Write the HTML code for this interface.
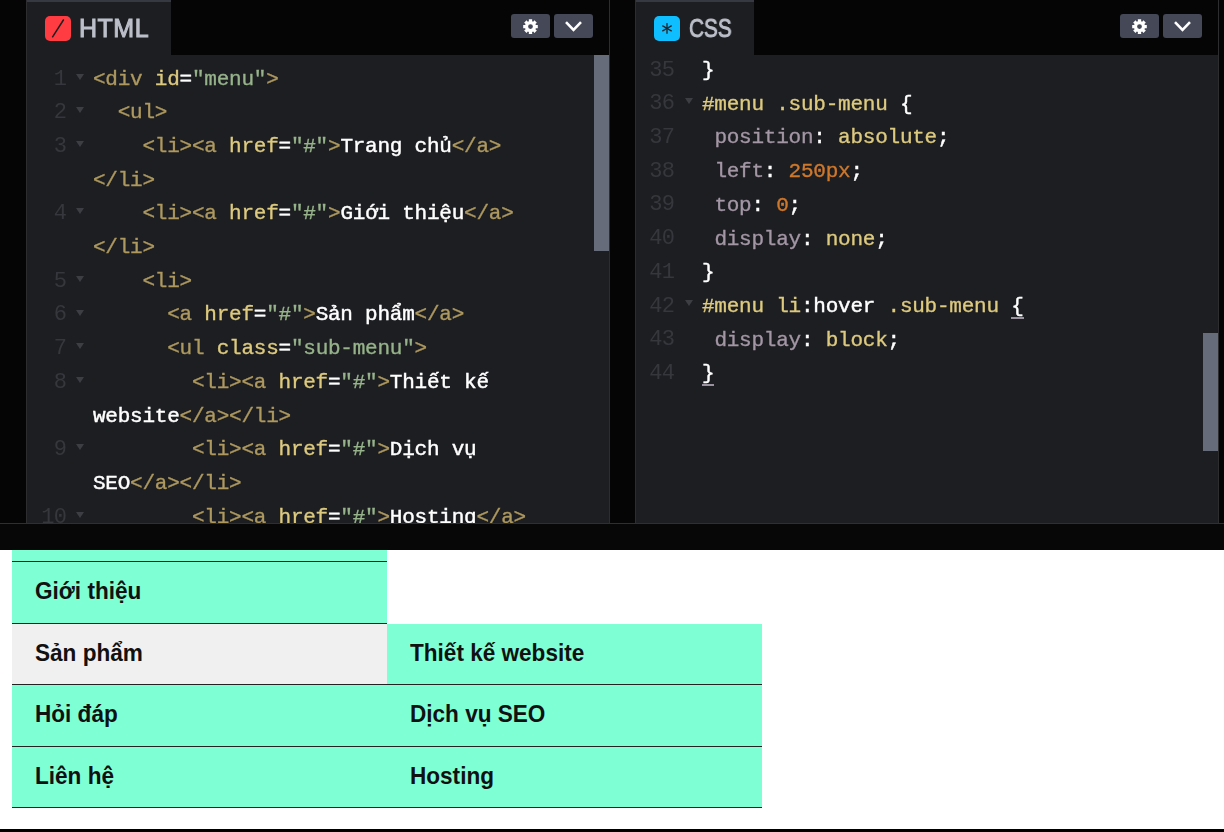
<!DOCTYPE html>
<html><head><meta charset="utf-8">
<style>
*{margin:0;padding:0;box-sizing:border-box}
html,body{width:1224px;height:832px;overflow:hidden;background:#fff}
body{position:relative;font-family:"Liberation Sans",sans-serif}
.abs{position:absolute}
#top{position:absolute;left:0;top:0;width:1224px;height:523px;background:#050505;overflow:hidden}
.panel{position:absolute;top:0;height:523px;background:#1d1e22;overflow:hidden}
.bd{position:absolute;top:0;width:1px;height:523px;background:#2d2d30}
.hdr{position:absolute;left:0;top:0;right:0;height:55px;background:#050505}
.tab{position:absolute;left:0;top:0;height:55px;background:#1d1e22;border-top:2px solid #363842}
.tabt{position:absolute;top:12px;font-family:"Liberation Sans",sans-serif;font-weight:normal;-webkit-text-stroke:1px currentColor;font-size:25px;line-height:32px;color:#bcbfc9;white-space:nowrap;transform-origin:0 0;will-change:transform}
.ico{position:absolute;top:16px;width:26px;height:25px;border-radius:5px}
.btn{position:absolute;top:14px;width:39px;height:24px;background:#444857;border-radius:3px}
.sb{position:absolute;width:15px;background:#676c7a}
.code{position:absolute;-webkit-text-stroke:0.35px currentColor;font-family:"Liberation Mono",monospace;font-size:21px;letter-spacing:-0.235px;line-height:33.7px;white-space:pre;color:#fff}
.ln{position:absolute;font-family:"Liberation Mono",monospace;font-size:22px;line-height:33.7px;color:#35373c;text-align:right;white-space:pre;letter-spacing:-0.87px}
.w{-webkit-text-stroke:0.45px currentColor}
.tri{position:absolute;width:0;height:0;border-left:4px solid transparent;border-right:4px solid transparent;border-top:6.5px solid #3d3e44}
.t{color:#ae995f}.at{color:#ddca7e}.s{color:#96b38a}.p{color:#a396a5}.n{color:#d0782a}.k{color:#ddca7e}
#bar{position:absolute;left:0;top:523px;width:1224px;height:27px;background:#070707;border-top:1px solid #2f2f31}
.g{position:absolute;background:#7fffd4}
.bl{position:absolute;height:1px;background:#222}
.mt{position:absolute;font-family:"Liberation Sans",sans-serif;font-weight:bold;font-size:24px;line-height:26px;color:#111;white-space:pre;transform:scaleX(0.94);transform-origin:0 0}
.ul{position:absolute;height:2px;background:#9a929e}
</style></head><body>
<div id="top">
  <div class="bd" style="left:26px"></div>
  <div class="bd" style="left:609px"></div>
  <div class="bd" style="left:635px"></div>
  <div class="bd" style="left:1218px"></div>
  <div class="panel" style="left:27px;width:582px">
    <div class="hdr">
      <div class="tab" style="width:144px"></div>
      <div class="ico" style="left:18px;background:#ff3c41"><svg width="26" height="25" style="position:absolute;left:0;top:0"><line x1="7.6" y1="20.8" x2="18.4" y2="4" stroke="#1d1e22" stroke-width="1.5" stroke-linecap="round"/></svg></div>
      <div class="tabt" style="left:52px;letter-spacing:0.5px">HTML</div>
      <div class="btn" style="left:484px"><svg width="39" height="24" style="position:absolute;left:0;top:0"><path transform="translate(19.5,12.6)" fill="#fff" fill-rule="evenodd" d="M5.37,-1.58 L7.30,-1.71 L7.30,1.71 L5.37,1.58 L4.91,2.69 L6.37,3.95 L3.95,6.37 L2.69,4.91 L1.58,5.37 L1.71,7.30 L-1.71,7.30 L-1.58,5.37 L-2.69,4.91 L-3.95,6.37 L-6.37,3.95 L-4.91,2.69 L-5.37,1.58 L-7.30,1.71 L-7.30,-1.71 L-5.37,-1.58 L-4.91,-2.69 L-6.37,-3.95 L-3.95,-6.37 L-2.69,-4.91 L-1.58,-5.37 L-1.71,-7.30 L1.71,-7.30 L1.58,-5.37 L2.69,-4.91 L3.95,-6.37 L6.37,-3.95 L4.91,-2.69 Z M-2.40,0.00 a2.40,2.40 0 1,0 4.80,0 a2.40,2.40 0 1,0 -4.80,0 Z"/></svg></div>
      <div class="btn" style="left:527px"><svg width="39" height="24" style="position:absolute;left:0;top:0"><polyline points="12,8.2 19.5,15.8 27,8.2" fill="none" stroke="#fff" stroke-width="2.6"/></svg></div>
    </div>
    <div class="sb" style="left:567px;top:55px;height:196px"></div>
  </div>
  <div class="panel" style="left:636px;width:582px">
    <div class="hdr">
      <div class="tab" style="width:118px"></div>
      <div class="ico" style="left:18px;background:#0ebeff"><svg width="26" height="25" style="position:absolute;left:0;top:0"><g stroke="#24252a" stroke-width="1.35" transform="translate(13,12.4)"><line x1="0" y1="-5.4" x2="0" y2="5.4"/><line x1="-4.7" y1="-2.7" x2="4.7" y2="2.7"/><line x1="-4.7" y1="2.7" x2="4.7" y2="-2.7"/></g></svg></div>
      <div class="tabt" style="left:52.5px;transform:scaleX(0.83)">CSS</div>
      <div class="btn" style="left:484px"><svg width="39" height="24" style="position:absolute;left:0;top:0"><path transform="translate(19.5,12.6)" fill="#fff" fill-rule="evenodd" d="M5.37,-1.58 L7.30,-1.71 L7.30,1.71 L5.37,1.58 L4.91,2.69 L6.37,3.95 L3.95,6.37 L2.69,4.91 L1.58,5.37 L1.71,7.30 L-1.71,7.30 L-1.58,5.37 L-2.69,4.91 L-3.95,6.37 L-6.37,3.95 L-4.91,2.69 L-5.37,1.58 L-7.30,1.71 L-7.30,-1.71 L-5.37,-1.58 L-4.91,-2.69 L-6.37,-3.95 L-3.95,-6.37 L-2.69,-4.91 L-1.58,-5.37 L-1.71,-7.30 L1.71,-7.30 L1.58,-5.37 L2.69,-4.91 L3.95,-6.37 L6.37,-3.95 L4.91,-2.69 Z M-2.40,0.00 a2.40,2.40 0 1,0 4.80,0 a2.40,2.40 0 1,0 -4.80,0 Z"/></svg></div>
      <div class="btn" style="left:527px"><svg width="39" height="24" style="position:absolute;left:0;top:0"><polyline points="12,8.2 19.5,15.8 27,8.2" fill="none" stroke="#fff" stroke-width="2.6"/></svg></div>
    </div>
    <div class="sb" style="left:567px;top:333px;height:118px"></div>
  </div>
  <div style="position:absolute;left:27px;top:55px;width:567px;height:468px;overflow:hidden;will-change:transform">
    <div style="position:absolute;left:-27px;top:-55px;width:1224px;height:600px">
<div class="ln" style="top:62.50px;left:26px;width:40px">1</div>
<div class="tri" style="top:73.65px;left:76.2px"></div>
<div class="code" style="top:62.50px;left:93px"><span class="t">&lt;div</span> <span class="at">id</span><span class="w">=</span><span class="s">"menu"</span><span class="t">&gt;</span></div>
<div class="ln" style="top:96.20px;left:26px;width:40px">2</div>
<div class="tri" style="top:107.35px;left:76.2px"></div>
<div class="code" style="top:96.20px;left:93px">  <span class="t">&lt;ul&gt;</span></div>
<div class="ln" style="top:129.90px;left:26px;width:40px">3</div>
<div class="tri" style="top:141.05px;left:76.2px"></div>
<div class="code" style="top:129.90px;left:93px">    <span class="t">&lt;li&gt;&lt;a</span> <span class="at">href</span><span class="w">=</span><span class="s">"#"</span><span class="t">&gt;</span><span class="w">Trang chủ</span><span class="t">&lt;/a&gt;</span></div>
<div class="code" style="top:163.60px;left:93px"><span class="t">&lt;/li&gt;</span></div>
<div class="ln" style="top:197.30px;left:26px;width:40px">4</div>
<div class="tri" style="top:208.45px;left:76.2px"></div>
<div class="code" style="top:197.30px;left:93px">    <span class="t">&lt;li&gt;&lt;a</span> <span class="at">href</span><span class="w">=</span><span class="s">"#"</span><span class="t">&gt;</span><span class="w">Giới thiệu</span><span class="t">&lt;/a&gt;</span></div>
<div class="code" style="top:231.00px;left:93px"><span class="t">&lt;/li&gt;</span></div>
<div class="ln" style="top:264.70px;left:26px;width:40px">5</div>
<div class="tri" style="top:275.85px;left:76.2px"></div>
<div class="code" style="top:264.70px;left:93px">    <span class="t">&lt;li&gt;</span></div>
<div class="ln" style="top:298.40px;left:26px;width:40px">6</div>
<div class="tri" style="top:309.55px;left:76.2px"></div>
<div class="code" style="top:298.40px;left:93px">      <span class="t">&lt;a</span> <span class="at">href</span><span class="w">=</span><span class="s">"#"</span><span class="t">&gt;</span><span class="w">Sản phẩm</span><span class="t">&lt;/a&gt;</span></div>
<div class="ln" style="top:332.10px;left:26px;width:40px">7</div>
<div class="tri" style="top:343.25px;left:76.2px"></div>
<div class="code" style="top:332.10px;left:93px">      <span class="t">&lt;ul</span> <span class="at">class</span><span class="w">=</span><span class="s">"sub-menu"</span><span class="t">&gt;</span></div>
<div class="ln" style="top:365.80px;left:26px;width:40px">8</div>
<div class="tri" style="top:376.95px;left:76.2px"></div>
<div class="code" style="top:365.80px;left:93px">        <span class="t">&lt;li&gt;&lt;a</span> <span class="at">href</span><span class="w">=</span><span class="s">"#"</span><span class="t">&gt;</span><span class="w">Thiết kế</span></div>
<div class="code" style="top:399.50px;left:93px"><span class="w">website</span><span class="t">&lt;/a&gt;&lt;/li&gt;</span></div>
<div class="ln" style="top:433.20px;left:26px;width:40px">9</div>
<div class="tri" style="top:444.35px;left:76.2px"></div>
<div class="code" style="top:433.20px;left:93px">        <span class="t">&lt;li&gt;&lt;a</span> <span class="at">href</span><span class="w">=</span><span class="s">"#"</span><span class="t">&gt;</span><span class="w">Dịch vụ</span></div>
<div class="code" style="top:466.90px;left:93px"><span class="w">SEO</span><span class="t">&lt;/a&gt;&lt;/li&gt;</span></div>
<div class="ln" style="top:500.60px;left:26px;width:40px">10</div>
<div class="tri" style="top:511.75px;left:76.2px"></div>
<div class="code" style="top:500.60px;left:93px">        <span class="t">&lt;li&gt;&lt;a</span> <span class="at">href</span><span class="w">=</span><span class="s">"#"</span><span class="t">&gt;</span><span class="w">Hosting</span><span class="t">&lt;/a&gt;</span></div>
    </div>
  </div>
  <div style="position:absolute;left:636px;top:55px;width:567px;height:468px;overflow:hidden;will-change:transform">
    <div style="position:absolute;left:-636px;top:-55px;width:1224px;height:600px">
<div class="ln" style="top:53.60px;left:634px;width:40px">35</div>
<div class="code" style="top:54.00px;left:702px"><span class="w">}</span></div>
<div class="ln" style="top:87.30px;left:634px;width:40px">36</div>
<div class="tri" style="top:97.55px;left:685.3px"></div>
<div class="code" style="top:87.70px;left:702px"><span class="k">#menu .sub-menu</span><span class="w"> {</span></div>
<div class="ln" style="top:121.00px;left:634px;width:40px">37</div>
<div class="code" style="top:121.40px;left:702px"> <span class="p">position</span><span class="w">: </span><span class="k">absolute</span><span class="w">;</span></div>
<div class="ln" style="top:154.70px;left:634px;width:40px">38</div>
<div class="code" style="top:155.10px;left:702px"> <span class="p">left</span><span class="w">: </span><span class="n">250px</span><span class="w">;</span></div>
<div class="ln" style="top:188.40px;left:634px;width:40px">39</div>
<div class="code" style="top:188.80px;left:702px"> <span class="p">top</span><span class="w">: </span><span class="n">0</span><span class="w">;</span></div>
<div class="ln" style="top:222.10px;left:634px;width:40px">40</div>
<div class="code" style="top:222.50px;left:702px"> <span class="p">display</span><span class="w">: </span><span class="k">none</span><span class="w">;</span></div>
<div class="ln" style="top:255.80px;left:634px;width:40px">41</div>
<div class="code" style="top:256.20px;left:702px"><span class="w">}</span></div>
<div class="ln" style="top:289.50px;left:634px;width:40px">42</div>
<div class="tri" style="top:299.75px;left:685.3px"></div>
<div class="code" style="top:289.90px;left:702px"><span class="k">#menu li</span><span class="w">:hover </span><span class="k">.sub-menu</span><span class="w"> {</span></div>
<div class="ln" style="top:323.20px;left:634px;width:40px">43</div>
<div class="code" style="top:323.60px;left:702px"> <span class="p">display</span><span class="w">: </span><span class="k">block</span><span class="w">;</span></div>
<div class="ln" style="top:356.90px;left:634px;width:40px">44</div>
<div class="code" style="top:357.30px;left:702px"><span class="w">}</span></div>
    <div class="ul" style="left:1011px;top:317.3px;width:12.5px"></div>
    <div class="ul" style="left:702px;top:384.3px;width:12px"></div>
    </div>
  </div>
</div>
<div id="bar"></div>
<div class="abs" style="left:0;top:550px;width:1224px;height:279px;background:#fff;overflow:hidden">
  <div class="g" style="left:12px;top:0;width:375px;height:11px"></div>
  <div class="bl" style="left:12px;top:11px;width:375px"></div>
  <div class="g" style="left:12px;top:12px;width:375px;height:61px"></div>
  <div class="bl" style="left:12px;top:73px;width:375px"></div>
  <div class="abs" style="left:12px;top:74px;width:375px;height:60px;background:#f0f0f0"></div>
  <div class="bl" style="left:12px;top:134px;width:750px"></div>
  <div class="g" style="left:387px;top:74px;width:375px;height:60px"></div>
  <div class="g" style="left:12px;top:135px;width:750px;height:61px"></div>
  <div class="bl" style="left:12px;top:196px;width:750px"></div>
  <div class="g" style="left:12px;top:197px;width:750px;height:60px"></div>
  <div class="bl" style="left:12px;top:257px;width:750px"></div>
  <div class="mt" style="left:34.5px;top:27.5px">Giới thiệu</div>
  <div class="mt" style="left:34.5px;top:89.5px">Sản phẩm</div>
  <div class="mt" style="left:34.5px;top:150.8px">Hỏi đáp</div>
  <div class="mt" style="left:34.5px;top:212.8px">Liên hệ</div>
  <div class="mt" style="left:409.6px;top:89.5px">Thiết kế website</div>
  <div class="mt" style="left:409.6px;top:150.8px">Dịch vụ SEO</div>
  <div class="mt" style="left:409.6px;top:212.8px">Hosting</div>
</div>
<div class="abs" style="left:0;top:829px;width:1224px;height:3px;background:#000"></div>
</body></html>
